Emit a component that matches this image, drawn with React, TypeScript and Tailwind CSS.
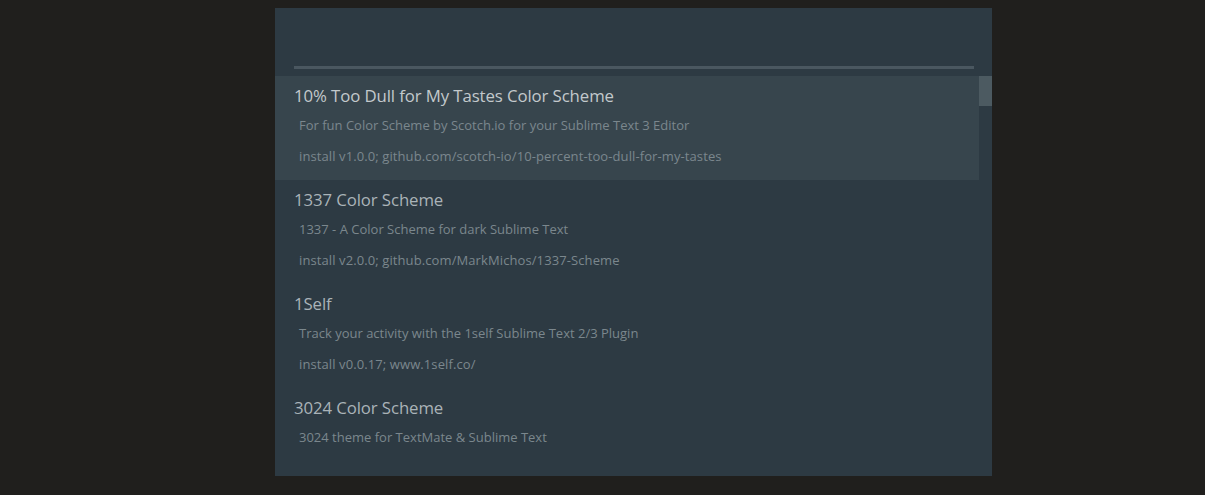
import React from 'react'

const packages = [
  {
    name: '10% Too Dull for My Tastes Color Scheme',
    desc: 'For fun Color Scheme by Scotch.io for your Sublime Text 3 Editor',
    install: 'install v1.0.0; github.com/scotch-io/10-percent-too-dull-for-my-tastes',
  },
  {
    name: '1337 Color Scheme',
    desc: '1337 - A Color Scheme for dark Sublime Text',
    install: 'install v2.0.0; github.com/MarkMichos/1337-Scheme',
  },
  {
    name: '1Self',
    desc: 'Track your activity with the 1self Sublime Text 2/3 Plugin',
    install: 'install v0.0.17; www.1self.co/',
  },
  {
    name: '3024 Color Scheme',
    desc: '3024 theme for TextMate & Sublime Text',
    install: '',
  },
]

export default function App() {
  return (
    <div
      className="h-[495px] w-[1205px] bg-[#201f1d] pt-2 pl-[275px]"
      style={{ fontFamily: '"Open Sans", "Noto Sans", sans-serif' }}
    >
      <div className="flex h-[468px] w-[717px] flex-col overflow-hidden bg-[#2d3a43]">
        <div className="h-[68px] shrink-0 px-[19px] pt-[58px]">
          <div className="h-[3px] w-[680px] bg-[#4a5760]" />
        </div>
        <div className="flex flex-1">
          <div className="flex-1">
            {packages.map((p, i) => (
              <div
                key={p.name}
                className={`h-[104px] pl-[19px] ${i === 0 ? 'bg-[#37454d]' : ''}`}
              >
                <div
                  className={`pt-[7px] text-[16.8px] leading-[26px] tracking-[-0.1px] ${
                    i === 0 ? 'text-[#c3c9cc]' : 'text-[#aab3b8]'
                  }`}
                >
                  {p.name}
                </div>
                <div className="pl-[5px] pt-[6px] text-[13px] leading-[20px] text-[#7b878d]">
                  {p.desc}
                </div>
                {p.install && (
                  <div className="pl-[5px] pt-[11px] text-[13px] leading-[20px] tracking-[0.1px] text-[#7b878d]">
                    {p.install}
                  </div>
                )}
              </div>
            ))}
          </div>
          <div className="w-[13px] shrink-0">
            <div className="h-[30px] bg-[#4c5a61]" />
          </div>
        </div>
      </div>
    </div>
  )
}
